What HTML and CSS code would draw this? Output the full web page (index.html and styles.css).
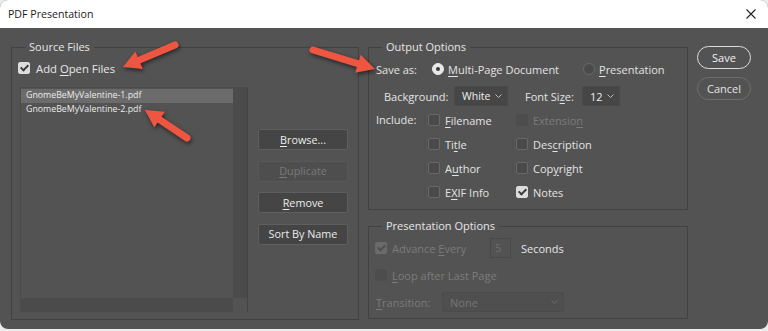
FILE: index.html
```html
<!DOCTYPE html>
<html lang="en">
<head>
    <meta charset="UTF-8">
    <title>PDF Presentation</title>
    <link rel="stylesheet" href="styles.css">
</head>
<body>
    <div class="window">
        <div class="titlebar">
            <span class="title">PDF Presentation</span>
            <svg class="close" width="10" height="10" viewBox="0 0 10 10">
                <path d="M0.5 0.5 L9.5 9.5 M9.5 0.5 L0.5 9.5" stroke="#222" stroke-width="1.1" fill="none"/>
            </svg>
        </div>

        <div class="dialog">
            <!-- Source Files -->
            <fieldset class="group source">
                <legend>Source Files</legend>
                <div class="check-row add-open">
                    <span class="box checked"></span>
                    <span>Add <u>O</u>pen Files</span>
                </div>
                <div class="source-main">
                    <div class="filelist">
                        <div class="files">
                            <div class="file selected">GnomeBeMyValentine-1.pdf</div>
                            <div class="file">GnomeBeMyValentine-2.pdf</div>
                        </div>
                        <div class="vscroll"></div>
                        <div class="hscroll"></div>
                        <div class="corner"></div>
                    </div>
                    <div class="side-buttons">
                        <button class="btn"><u>B</u>rowse...</button>
                        <button class="btn disabled"><u>D</u>uplicate</button>
                        <button class="btn"><u>R</u>emove</button>
                        <button class="btn">Sort By Name</button>
                    </div>
                </div>
            </fieldset>

            <div class="options">
                <!-- Output Options -->
                <fieldset class="group output">
                    <legend>Output Options</legend>
                    <div class="save-row">
                        <span class="save-label">Save as:</span>
                        <span class="radio-opt first"><span class="radio on"></span><span><u>M</u>ulti-Page Document</span></span>
                        <span class="radio-opt"><span class="radio"></span><span><u>P</u>resentation</span></span>
                    </div>
                    <div class="bg-row">
                        <span class="bg-label">Back<u>g</u>round:</span>
                        <span class="select bg-select">White<svg class="chev" width="7" height="4" viewBox="0 0 7 4"><path d="M0.5 0.5 L3.5 3.5 L6.5 0.5" stroke="#bdbdbd" fill="none"/></svg></span>
                        <span class="size-label">Font Si<u>z</u>e:</span>
                        <span class="select size-select">12<svg class="chev" width="7" height="4" viewBox="0 0 7 4"><path d="M0.5 0.5 L3.5 3.5 L6.5 0.5" stroke="#bdbdbd" fill="none"/></svg></span>
                    </div>
                    <div class="include">
                        <span class="inc-label">Include:</span>
                        <span class="check-row"><span class="box"></span><span><u>F</u>ilename</span></span>
                        <span class="check-row off"><span class="box"></span><span>Extensio<u>n</u></span></span>

                        <span></span>
                        <span class="check-row"><span class="box"></span><span>Ti<u>t</u>le</span></span>
                        <span class="check-row"><span class="box"></span><span>Des<u>c</u>ription</span></span>

                        <span></span>
                        <span class="check-row"><span class="box"></span><span>A<u>u</u>thor</span></span>
                        <span class="check-row"><span class="box"></span><span>Cop<u>y</u>right</span></span>

                        <span></span>
                        <span class="check-row"><span class="box"></span><span>E<u>X</u>IF Info</span></span>
                        <span class="check-row"><span class="box checked"></span><span>Notes</span></span>
                    </div>
                </fieldset>

                <!-- Presentation Options -->
                <fieldset class="group presentation">
                    <legend>Presentation Options</legend>
                    <div class="advance-row">
                        <span class="check-row off advance"><span class="box checked"></span><span>Advance <u>E</u>very</span></span>
                        <span class="num-input">5</span>
                        <span class="seconds">Seconds</span>
                    </div>
                    <div class="check-row off loop"><span class="box"></span><span><u>L</u>oop after Last Page</span></div>
                    <div class="transition-row">
                        <span class="trans-label"><u>T</u>ransition:</span>
                        <span class="select trans-select">None<svg class="chev" width="7" height="4" viewBox="0 0 7 4"><path d="M0.5 0.5 L3.5 3.5 L6.5 0.5" stroke="#6c6c6c" fill="none"/></svg></span>
                    </div>
                </fieldset>
            </div>

            <div class="actions">
                <button class="pill primary">Save</button>
                <button class="pill">Cancel</button>
            </div>
        </div>

        <!-- callout arrows -->
        <svg class="arrows" width="768" height="331" viewBox="0 0 768 331">
            <g fill="#ef5641" stroke="#ef5641" stroke-width="7" stroke-linecap="round">
                <g transform="translate(175 45) rotate(157.1)">
                    <line x1="0" y1="0" x2="44" y2="0"/>
                    <polygon points="39,-9.5 56.5,0 39,9.5" stroke="none"/>
                </g>
                <g transform="translate(313 50) rotate(17)">
                    <line x1="0" y1="0" x2="52" y2="0"/>
                    <polygon points="47,-9.5 64.8,0 47,9.5" stroke="none"/>
                </g>
                <g transform="translate(187 138) rotate(-146.3)">
                    <line x1="0" y1="0" x2="38" y2="0"/>
                    <polygon points="33,-9.5 50.5,0 33,9.5" stroke="none"/>
                </g>
            </g>
        </svg>
    </div>
</body>
</html>
```

FILE: styles.css
```css
body {
    margin: 0;
    background-color: #ececec;
    font-family: 'Open Sans', 'Noto Sans', sans-serif;
}

.window {
    position: relative;
    width: 768px;
    height: 329px;
    border-radius: 8px;
    overflow: hidden;
    display: flex;
    flex-direction: column;
    background-color: #535353;
}

.titlebar {
    height: 28px;
    flex-shrink: 0;
    box-sizing: border-box;
    background-color: #fff;
    display: flex;
    align-items: center;
    justify-content: space-between;
    padding: 0 12px 0 8px;
}

.title {
    font-size: 10.6px;
    color: #1b1b1b;
}

.dialog {
    flex: 1;
    display: flex;
    gap: 9px;
    padding: 10px 12px 0 11px;
    color: #e3e3e3;
    font-size: 11px;
}

u {
    text-decoration-thickness: 1px;
    text-underline-offset: 2px;
}

/* Group boxes */
.group {
    margin: 0;
    padding: 0;
    min-width: 0;
    box-sizing: border-box;
    border: 1px solid #424242;
}

.group legend {
    margin-left: 13px;
    padding: 0 4px;
    font-size: 11px;
    line-height: 18px;
    color: #e6e6e6;
}

.source {
    width: 348px;
    height: 282px;
}

.options {
    display: flex;
    flex-direction: column;
    gap: 7px;
}

.output {
    width: 320px;
    height: 172px;
}

.presentation {
    width: 320px;
    height: 102px;
}

/* Checkboxes & radios */
.check-row {
    display: flex;
    align-items: center;
    gap: 5px;
    height: 16px;
    white-space: nowrap;
}

.box {
    position: relative;
    width: 12px;
    height: 12px;
    box-sizing: border-box;
    border: 1px solid #6a6a6a;
    border-radius: 2px;
    background-color: #4a4a4a;
    flex-shrink: 0;
}

.box.checked {
    background-color: #dcdcdc;
    border-color: #dcdcdc;
}

.box.checked::after {
    content: "";
    position: absolute;
    left: 3px;
    top: 0px;
    width: 3px;
    height: 6px;
    border-right: 2px solid #3a3a3a;
    border-bottom: 2px solid #3a3a3a;
    transform: rotate(45deg);
}

.check-row.off {
    color: #7b7b7b;
}

.check-row.off .box {
    border-color: #4d4d4d;
    background-color: #4d4d4d;
}

.check-row.off .box.checked {
    background-color: #6b6b6b;
    border-color: #6b6b6b;
}

.check-row.off .box.checked::after {
    border-color: #4f4f4f;
}

.radio {
    position: relative;
    width: 12px;
    height: 12px;
    box-sizing: border-box;
    border-radius: 50%;
    border: 1px solid #6a6a6a;
    background-color: #4a4a4a;
    flex-shrink: 0;
}

.radio.on {
    background-color: #e8e8e8;
    border-color: #e8e8e8;
}

.radio.on::after {
    content: "";
    position: absolute;
    left: 3px;
    top: 3px;
    width: 4px;
    height: 4px;
    border-radius: 50%;
    background-color: #3a3a3a;
}

/* Source files */
.add-open {
    margin: 4px 0 0 6px;
    gap: 6px;
    font-size: 11.3px;
    color: #e8e8e8;
}

.source-main {
    display: flex;
    gap: 10px;
    margin: 11px 0 0 8px;
}

.filelist {
    width: 228px;
    height: 225px;
    box-sizing: border-box;
    display: grid;
    grid-template-columns: 1fr 14px;
    grid-template-rows: 1fr 14px;
    border-left: 1px solid #4b4b4b;
    border-top: 1px solid #4b4b4b;
    border-right: 1px solid #444;
}

.files {
    padding-top: 1px;
}

.file {
    height: 13.5px;
    line-height: 13.5px;
    padding-left: 5px;
    font-size: 8.8px;
    color: #ececec;
    white-space: nowrap;
}

.file.selected {
    background-color: #6b6b6b;
}

.vscroll,
.hscroll {
    background-color: #4b4b4b;
}

.corner {
    background-color: #535353;
}

.side-buttons {
    width: 90px;
    padding-top: 42px;
    display: flex;
    flex-direction: column;
    gap: 10.5px;
}

.btn {
    height: 21px;
    padding: 0;
    box-sizing: border-box;
    border: 1px solid #5f5f5f;
    border-radius: 2px;
    background-color: #454545;
    color: #ebebeb;
    font-family: inherit;
    font-size: 10.8px;
    line-height: 18px;
}

.btn.disabled {
    background-color: #4e4e4e;
    border-color: #585858;
    color: #7a7a7a;
}

/* Output options */
.save-row {
    display: flex;
    align-items: center;
    height: 16px;
    margin-top: 5px;
    padding-left: 7px;
}

.save-label {
    width: 56px;
}

.radio-opt {
    display: flex;
    align-items: center;
    gap: 4px;
    white-space: nowrap;
}

.radio-opt.first {
    width: 151px;
}

.bg-row {
    display: flex;
    align-items: center;
    height: 20px;
    margin-top: 9px;
    padding-left: 15px;
}

.bg-label {
    width: 70px;
}

.size-label {
    width: 57px;
    margin-left: 17px;
}

.select {
    height: 20px;
    box-sizing: border-box;
    display: flex;
    align-items: center;
    justify-content: space-between;
    padding: 0 5px 0 7px;
    border: 1px solid #4a4a4a;
    border-radius: 2px;
    background-color: #464646;
    color: #f0f0f0;
}

.bg-select {
    width: 54px;
    font-size: 10.5px;
}

.size-select {
    width: 38px;
}

.include {
    display: grid;
    grid-template-columns: 52px 88px auto;
    row-gap: 8px;
    margin-top: 6px;
    padding-left: 7px;
}

.inc-label {
    line-height: 16px;
}

/* Presentation options */
.advance-row {
    display: flex;
    align-items: center;
    height: 20px;
    margin-top: 3px;
    padding-left: 6px;
}

.advance {
    width: 115px;
}

.num-input {
    width: 21px;
    height: 20px;
    box-sizing: border-box;
    border: 1px solid #4a4a4a;
    padding-left: 4px;
    color: #6f6f6f;
    line-height: 18px;
}

.seconds {
    margin-left: 10px;
    color: #e6e6e6;
}

.loop {
    margin-top: 9px;
    padding-left: 6px;
}

.transition-row {
    display: flex;
    align-items: center;
    height: 20px;
    margin-top: 9px;
    padding-left: 7px;
}

.trans-label {
    width: 66px;
    color: #7b7b7b;
}

.trans-select {
    width: 122px;
    color: #767676;
    background-color: #4f4f4f;
    border-color: #4b4b4b;
}

/* Save / Cancel */
.actions {
    display: flex;
    flex-direction: column;
    gap: 8px;
    padding-top: 8px;
}

.pill {
    width: 54px;
    height: 23px;
    padding: 0;
    box-sizing: border-box;
    border: 1px solid #6e6e6e;
    border-radius: 12px;
    background-color: transparent;
    color: #e3e3e3;
    font-family: inherit;
    font-size: 11px;
}

.pill.primary {
    border: 1.5px solid #dcdcdc;
    color: #f2f2f2;
}

/* Callout arrows */
.arrows {
    position: absolute;
    left: 0;
    top: 0;
    pointer-events: none;
    filter: drop-shadow(1px 2px 2px rgba(0, 0, 0, 0.55));
}
```
